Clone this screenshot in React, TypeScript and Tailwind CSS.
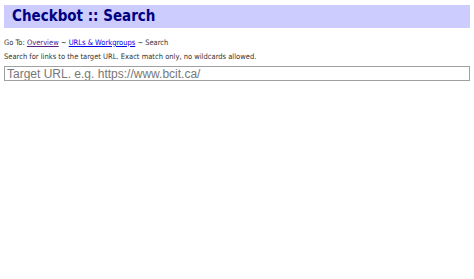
export default function App() {
  return (
    <div className="min-h-screen bg-white px-[4px] pt-[5px] font-['DejaVu_Sans_Condensed','DejaVu_Sans',Tahoma,sans-serif] text-[7.5px] text-[#333]">
      <div className="flex h-[23px] items-center bg-[#ccccff] pl-[8px]">
        <h1 className="text-[15px] font-bold leading-none text-[#000080]">
          Checkbot :: Search
        </h1>
      </div>

      <div className="mt-[10px] leading-[10px]">
        Go To:{" "}
        <a href="#" className="text-[#551a8b] underline">
          Overview
        </a>{" "}
        ~{" "}
        <a href="#" className="text-[#0000ee] underline">
          URLs &amp; Workgroups
        </a>{" "}
        ~ Search
      </div>

      <p className="mt-[4px] leading-[10px]">
        Search for links to the target URL. Exact match only, no wildcards allowed.
      </p>

      <input
        type="text"
        placeholder="Target URL. e.g. https://www.bcit.ca/"
        className="mt-[4px] block h-[15px] w-full border border-[#a0a0a0] px-[2px] font-['Liberation_Sans',Arial,sans-serif] text-[12px] leading-none placeholder:text-[#777] outline-none"
      />
    </div>
  );
}
